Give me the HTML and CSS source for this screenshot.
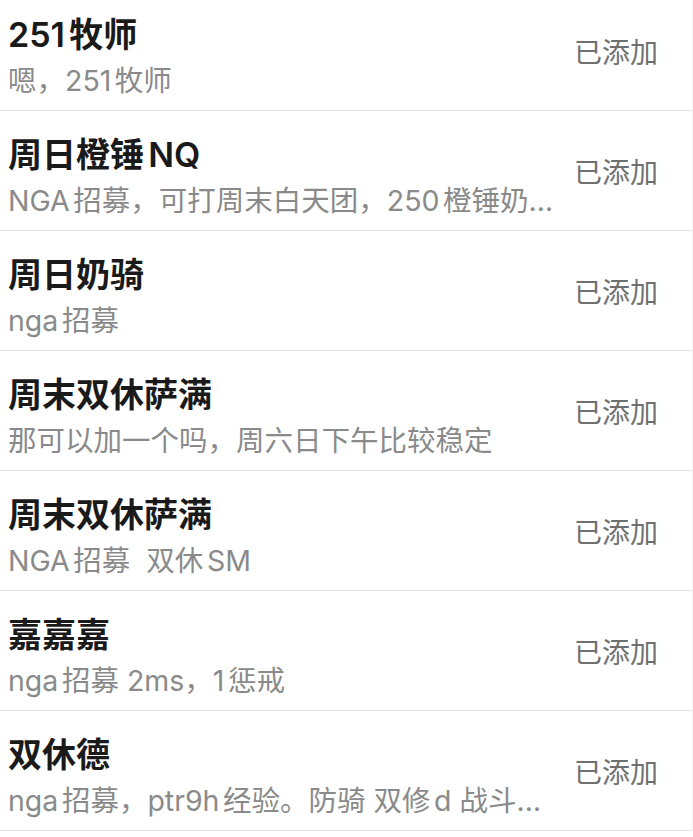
FILE: index.html
```html
<!DOCTYPE html>
<html lang="zh-CN">
<head>
    <meta charset="UTF-8">
    <meta name="viewport" content="width=device-width, initial-scale=1.0">
    <title>好友列表</title>
    <link rel="stylesheet" href="styles.css">
</head>
<body>
    <div class="list">
        <div class="row">
            <div class="info">
                <div class="name">251牧师</div>
                <div class="msg">嗯，251牧师</div>
            </div>
            <div class="status">已添加</div>
        </div>
        <div class="row">
            <div class="info">
                <div class="name">周日橙锤NQ</div>
                <div class="msg">NGA招募，可打周末白天团，250橙锤奶骑，周日下午有空</div>
            </div>
            <div class="status">已添加</div>
        </div>
        <div class="row">
            <div class="info">
                <div class="name">周日奶骑</div>
                <div class="msg">nga招募</div>
            </div>
            <div class="status">已添加</div>
        </div>
        <div class="row">
            <div class="info">
                <div class="name">周末双休萨满</div>
                <div class="msg">那可以加一个吗，周六日下午比较稳定</div>
            </div>
            <div class="status">已添加</div>
        </div>
        <div class="row">
            <div class="info">
                <div class="name">周末双休萨满</div>
                <div class="msg">NGA招募&nbsp;&nbsp;双休SM</div>
            </div>
            <div class="status">已添加</div>
        </div>
        <div class="row">
            <div class="info">
                <div class="name">嘉嘉嘉</div>
                <div class="msg">nga招募 2ms，1惩戒</div>
            </div>
            <div class="status">已添加</div>
        </div>
        <div class="row">
            <div class="info">
                <div class="name">双休德</div>
                <div class="msg">nga招募，ptr9h经验。防骑 双修d 战斗力还行</div>
            </div>
            <div class="status">已添加</div>
        </div>
    </div>
</body>
</html>
```

FILE: styles.css
```css
body {
    margin: 0;
    background: #fff;
    font-family: Inter, "Noto Sans CJK SC", sans-serif;
    overflow: hidden;
}
.list {
    margin-top: -9px;
    border-right: 1px solid #f3f3f3;
}
.row {
    display: flex;
    align-items: center;
    height: 119px;
    padding: 0 34px 0 8px;
    border-bottom: 1px solid #e2e2e2;
}
.info {
    align-self: flex-start;
    flex: 1;
    min-width: 0;
    margin-right: 16px;
    padding-top: 22px;
}
.name {
    font-size: 34px;
    font-weight: 600;
    line-height: 44px;
    color: #1a1a1a;
    white-space: nowrap;
    overflow: hidden;
    text-overflow: ellipsis;
    text-autospace: normal;
}
.msg {
    margin-top: 5px;
    font-size: 28.5px;
    line-height: 38px;
    color: #8a8a8a;
    white-space: nowrap;
    overflow: hidden;
    text-overflow: ellipsis;
    text-autospace: normal;
}
.status {
    font-size: 28px;
    color: #707070;
}
```
